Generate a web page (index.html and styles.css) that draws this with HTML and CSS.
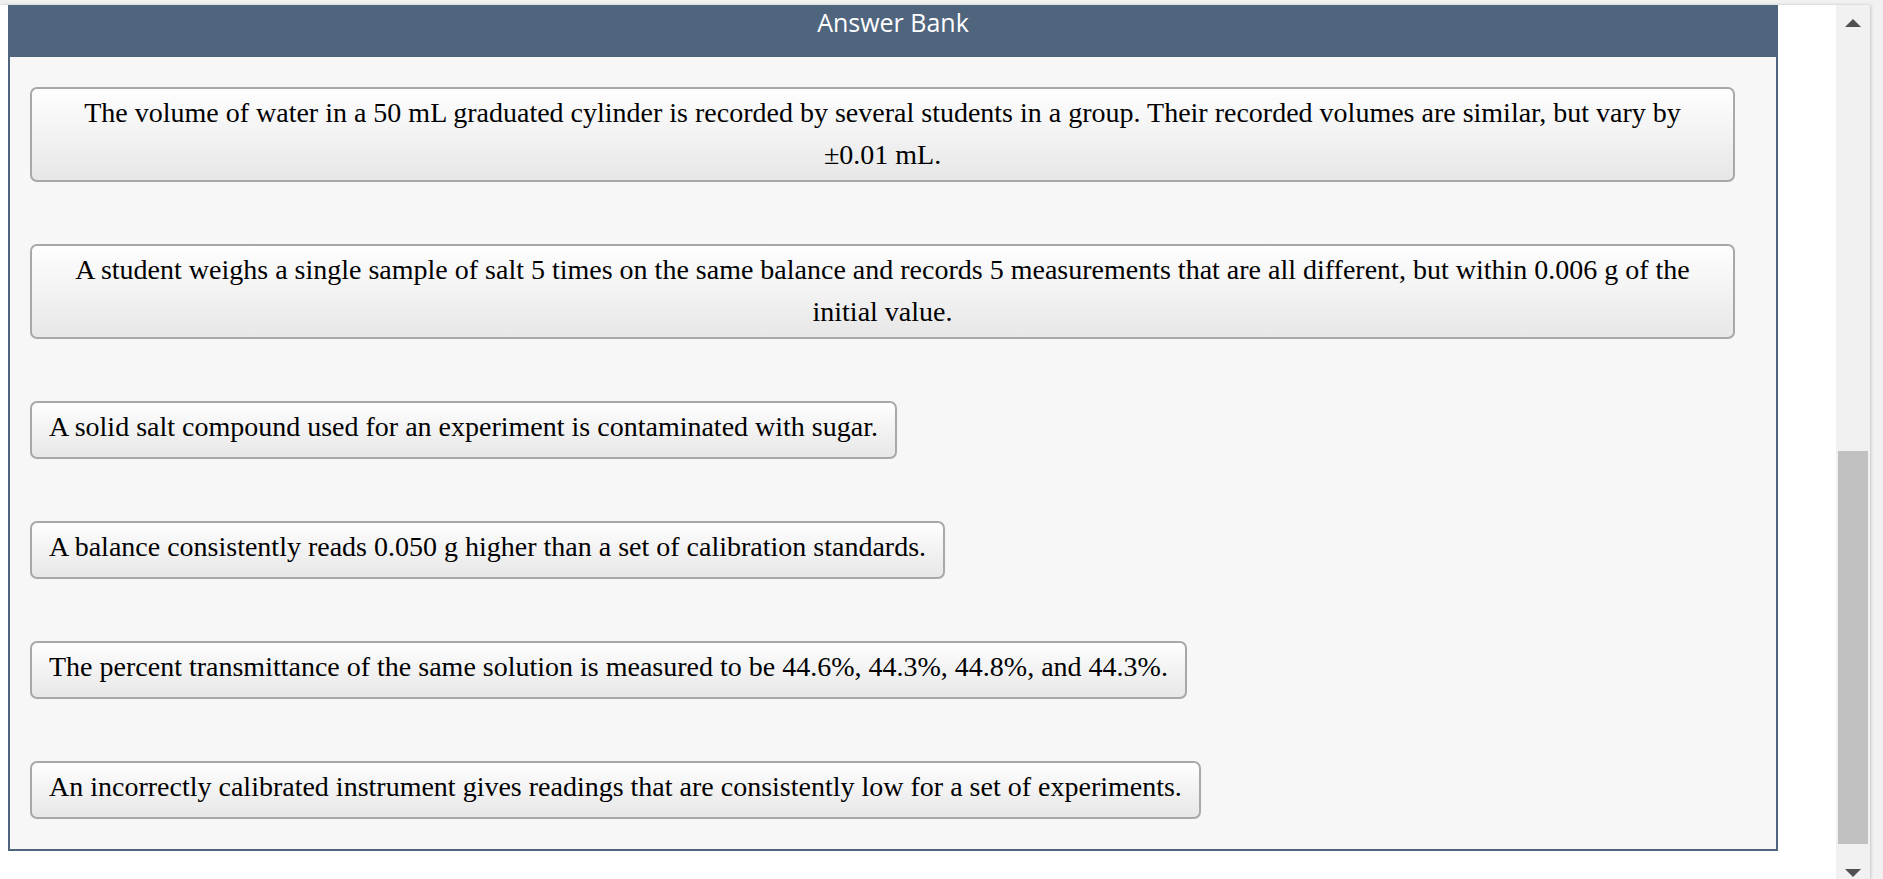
FILE: index.html
```html
<!DOCTYPE html>
<html lang="en">
<head>
    <meta charset="UTF-8">
    <meta name="viewport" content="width=device-width, initial-scale=1.0">
    <title>Answer Bank</title>
    <link rel="stylesheet" href="styles.css">
</head>
<body>
    <div class="frame">
        <div class="content">
            <div class="bank">
                <div class="bank-head">Answer Bank</div>
                <div class="bank-body">
                    <div class="chip wide">The volume of water in a 50 mL graduated cylinder is recorded by several students in a group. Their recorded volumes are similar, but vary by<br>&plusmn;0.01 mL.</div>
                    <div class="chip wide">A student weighs a single sample of salt 5 times on the same balance and records 5 measurements that are all different, but within 0.006 g of the initial value.</div>
                    <div class="chip">A solid salt compound used for an experiment is contaminated with sugar.</div>
                    <div class="chip">A balance consistently reads 0.050 g higher than a set of calibration standards.</div>
                    <div class="chip">The percent transmittance of the same solution is measured to be 44.6%, 44.3%, 44.8%, and 44.3%.</div>
                    <div class="chip">An incorrectly calibrated instrument gives readings that are consistently low for a set of experiments.</div>
                </div>
            </div>
        </div>
        <div class="scrollbar">
            <div class="sb-btn">
                <svg width="16" height="8" viewBox="0 0 16 8"><polygon points="8,0 16,8 0,8" fill="#505050"/></svg>
            </div>
            <div class="sb-track"></div>
            <div class="sb-thumb"></div>
            <div class="sb-btn sb-down">
                <svg width="16" height="8" viewBox="0 0 16 8"><polygon points="0,0 16,0 8,8" fill="#505050"/></svg>
            </div>
        </div>
    </div>
</body>
</html>
```

FILE: styles.css
```css
html, body {
    margin: 0;
    height: 100%;
}
body {
    background-color: #f1f1f1;
    overflow: hidden;
}
.frame {
    margin-top: 5px;
    width: 1870px;
    height: 874px;
    display: flex;
    background-color: #fff;
    box-shadow: 1px 0 3px rgba(0, 0, 0, 0.18);
}
.content {
    flex: 1;
    padding-left: 8px;
}
.bank {
    width: 1770px;
    box-sizing: border-box;
    background-color: #f7f7f7;
    border: 2px solid #4f647d;
    border-top: none;
}
.bank-head {
    height: 52px;
    margin: 0 -2px;
    background-color: #4f647d;
    color: #fff;
    font-family: "Open Sans", sans-serif;
    font-size: 25px;
    line-height: 35px;
    text-align: center;
}
.bank-body {
    display: flex;
    flex-direction: column;
    align-items: flex-start;
    gap: 62px;
    padding: 30px 41px 30px 20px;
}
.chip {
    font-family: "Liberation Serif", "Times New Roman", serif;
    font-size: 28px;
    line-height: 42px;
    color: #000;
    padding: 3px 17px 9px;
    border: 2px solid #a8a8a8;
    border-radius: 7px;
    background: linear-gradient(#fefefe, #e7e7e7);
}
.chip.wide {
    align-self: stretch;
    text-align: center;
    padding-bottom: 4px;
}
.scrollbar {
    width: 34px;
    display: flex;
    flex-direction: column;
    background-color: #f1f1f1;
}
.sb-btn {
    height: 34px;
    display: flex;
    justify-content: center;
    align-items: flex-start;
    padding-top: 14px;
    box-sizing: border-box;
}
.sb-down {
    height: 35px;
    padding-top: 25px;
}
.sb-track {
    flex: 1;
}
.sb-thumb {
    height: 393px;
    margin: 0 2px;
    background-color: #c1c1c1;
}
```
